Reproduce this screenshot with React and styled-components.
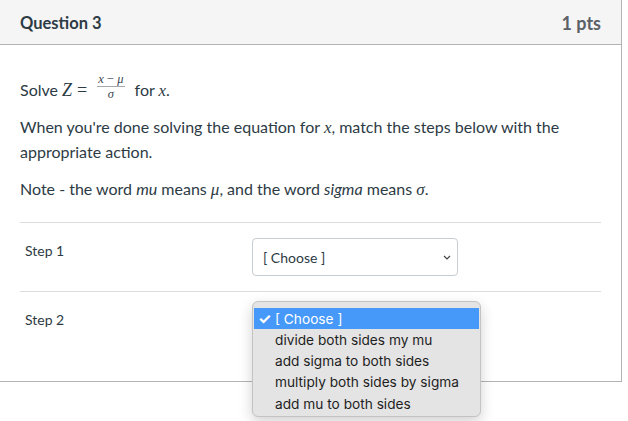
import React from "react";
import styled, { createGlobalStyle } from "styled-components";

const Global = createGlobalStyle`
  html, body { margin: 0; padding: 0; background: #ffffff; min-height: 421px; }
  #root { min-height: 421px; }
  body { font-family: Lato, "Open Sans", sans-serif; color: #2d3b45; }
`;

const Card = styled.div`
  box-sizing: border-box;
  width: 623px;
  margin: -1px 0 0 -1px;
  border: 1px solid #b3b3b3;
  background: #fff;
`;

const Header = styled.div`
  box-sizing: border-box;
  height: 45px;
  padding: 0 20px;
  display: flex;
  align-items: center;
  justify-content: space-between;
  background: #f5f5f5;
  border-bottom: 1px solid #b3b3b3;
`;

const Title = styled.div`
  font-size: 16.5px;
  font-weight: 700;
  color: #2d3b45;
  padding-top: 1px;
`;

const Points = styled.div`
  font-size: 18px;
  font-weight: 700;
  color: #5b6166;
  padding-top: 1px;
`;

const Body = styled.div`
  padding: 32px 20px 21px 20px;
`;

const P = styled.p`
  margin: 0 0 12px 0;
  font-size: 16px;
  line-height: 25px;
  color: #2d3b45;
`;

const M = styled.span`
  font-family: "Liberation Serif", "DejaVu Serif", serif;
  font-style: ${(p) => (p.$upright ? "normal" : "italic")};
  font-size: ${(p) => p.$size || "18px"};
  line-height: 20px;
  margin: ${(p) => p.$margin || "0"};
`;

const Frac = styled.span`
  display: inline-flex;
  flex-direction: column;
  align-items: stretch;
  vertical-align: top;
  height: 25px;
  margin: 0 10px 0 10px;
  font-family: "Liberation Serif", "DejaVu Serif", serif;
  font-style: italic;
  font-size: 12.5px;
  color: #3a4650;
`;

const Num = styled.span`
  margin-top: -4px;
  line-height: 13px;
  text-align: center;
  padding: 0 1px;
`;

const Bar = styled.span`
  height: 1px;
  background: #a3a8ad;
`;

const Den = styled.span`
  line-height: 14px;
  text-align: center;
`;

const Em = styled.em`
  font-style: italic;
`;

const Answers = styled.div`
  margin-top: 21px;
`;

const Row = styled.div`
  display: flex;
  align-items: flex-start;
  border-top: 1px solid #dcdcdc;
  padding: 15px 0;
`;

const Label = styled.div`
  box-sizing: border-box;
  width: 232px;
  padding-left: 5px;
  font-size: 14px;
  line-height: 25px;
  color: #2d3b45;
`;

const SelectWrap = styled.div`
  position: relative;
`;

const Select = styled.div`
  box-sizing: border-box;
  width: 206px;
  height: 38px;
  border: 1px solid #c7cdd1;
  border-radius: 4px;
  background: #fff;
  display: flex;
  align-items: center;
  justify-content: space-between;
  padding: 0 6px 0 10px;
  font-size: 14px;
  color: #2d3b45;
`;

const Popup = styled.div`
  position: absolute;
  top: -6px;
  left: 0;
  box-sizing: border-box;
  width: 229px;
  height: 116px;
  padding: 6px 1px 3px;
  background: #e4e4e4;
  border: 1px solid #c3c3c3;
  border-radius: 6px;
  box-shadow: 0 5px 14px rgba(0, 0, 0, 0.18);
  font-family: Inter, "Liberation Sans", sans-serif;
  z-index: 5;
`;

const Item = styled.div`
  display: flex;
  align-items: center;
  height: 21.25px;
  padding-left: 4px;
  font-size: 13.7px;
  color: ${(p) => (p.$active ? "#ffffff" : "#1e1e1e")};
  background: ${(p) => (p.$active ? "#4699f8" : "transparent")};
`;

const Check = styled.span`
  width: 17px;
  font-size: 15px;
  font-weight: 700;
`;

const Chevron = () => (
  <svg width="8" height="5" viewBox="0 0 8 5">
    <path d="M1 1 L4 4 L7 1" fill="none" stroke="#444" strokeWidth="1.2" />
  </svg>
);

const options = [
  "[ Choose ]",
  "divide both sides my mu",
  "add sigma to both sides",
  "multiply both sides by sigma",
  "add mu to both sides",
];

export default function App() {
  return (
    <>
      <Global />
      <Card>
        <Header>
          <Title>Question 3</Title>
          <Points>1 pts</Points>
        </Header>
        <Body>
          <P>
            Solve <M>Z</M>
            <M $upright $margin="0 0 0 5px">=</M>
            <Frac>
              <Num>x{"\u2009"}−{"\u2009"}μ</Num>
              <Bar />
              <Den>σ</Den>
            </Frac>
            for <M $size="17px">x</M>.
          </P>
          <P>
            When you're done solving the equation for <M $size="17px">x</M>, match the
            steps below with the appropriate action.
          </P>
          <P>
            Note - the word <Em>mu</Em> means <M $size="17px">μ</M>, and the word{" "}
            <Em>sigma</Em> means <M $size="17px">σ</M>.
          </P>
          <Answers>
            <Row>
              <Label>Step 1</Label>
              <SelectWrap>
                <Select>
                  <span>[ Choose ]</span>
                  <Chevron />
                </Select>
              </SelectWrap>
            </Row>
            <Row>
              <Label>Step 2</Label>
              <SelectWrap>
                <Select>
                  <span>[ Choose ]</span>
                  <Chevron />
                </Select>
                <Popup>
                  {options.map((o, i) => (
                    <Item key={o} $active={i === 0}>
                      <Check>{i === 0 ? "✓" : ""}</Check>
                      {o}
                    </Item>
                  ))}
                </Popup>
              </SelectWrap>
            </Row>
          </Answers>
        </Body>
      </Card>
    </>
  );
}
